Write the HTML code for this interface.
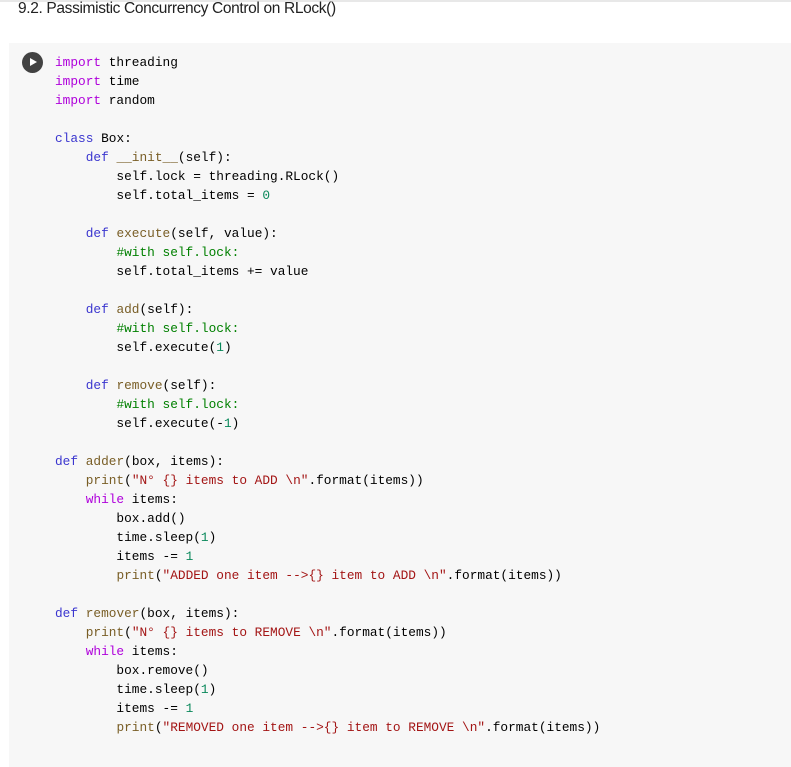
<!DOCTYPE html>
<html><head><style>
body{margin:0;width:791px;height:767px;background:#fff;overflow:hidden;position:relative;font-family:"Liberation Sans",sans-serif}
.top{position:absolute;top:0;left:0;right:0;height:2px;background:#e8e8e8}
.title{position:absolute;left:18px;top:0px;font-size:15.5px;letter-spacing:-0.35px;color:#212121;line-height:18px}
.cell{position:absolute;left:9px;top:43px;right:0;bottom:0;background:#f7f7f7}
.run{position:absolute;left:22px;top:52px;width:21px;height:21px;border-radius:50%;background:#424242}
.run:after{content:"";position:absolute;left:8px;top:6px;border-left:7px solid #fff;border-top:4.5px solid transparent;border-bottom:4.5px solid transparent}
pre{position:absolute;left:55px;top:53px;margin:0;font-family:"Liberation Mono",monospace;font-size:12.8px;line-height:19px;color:#000}
.k{color:#af00db}.d{color:#3b36cf}.f{color:#795e26}.s{color:#a31515}.n{color:#09885a}.c{color:#008000}
</style></head><body>
<div class="top"></div>
<div class="title">9.2. Passimistic Concurrency Control on RLock()</div>
<div class="cell"></div>
<div class="run"></div>
<pre><span class="k">import</span> threading
<span class="k">import</span> time
<span class="k">import</span> random

<span class="d">class</span> Box:
    <span class="d">def</span> <span class="f">__init__</span>(self):
        self.lock = threading.RLock()
        self.total_items = <span class="n">0</span>

    <span class="d">def</span> <span class="f">execute</span>(self, value):
        <span class="c">#with self.lock:</span>
        self.total_items += value

    <span class="d">def</span> <span class="f">add</span>(self):
        <span class="c">#with self.lock:</span>
        self.execute(<span class="n">1</span>)

    <span class="d">def</span> <span class="f">remove</span>(self):
        <span class="c">#with self.lock:</span>
        self.execute(-<span class="n">1</span>)

<span class="d">def</span> <span class="f">adder</span>(box, items):
    <span class="f">print</span>(<span class="s">"N° {} items to ADD \n"</span>.format(items))
    <span class="k">while</span> items:
        box.add()
        time.sleep(<span class="n">1</span>)
        items -= <span class="n">1</span>
        <span class="f">print</span>(<span class="s">"ADDED one item --&gt;{} item to ADD \n"</span>.format(items))

<span class="d">def</span> <span class="f">remover</span>(box, items):
    <span class="f">print</span>(<span class="s">"N° {} items to REMOVE \n"</span>.format(items))
    <span class="k">while</span> items:
        box.remove()
        time.sleep(<span class="n">1</span>)
        items -= <span class="n">1</span>
        <span class="f">print</span>(<span class="s">"REMOVED one item --&gt;{} item to REMOVE \n"</span>.format(items))
</pre>
</body></html>
